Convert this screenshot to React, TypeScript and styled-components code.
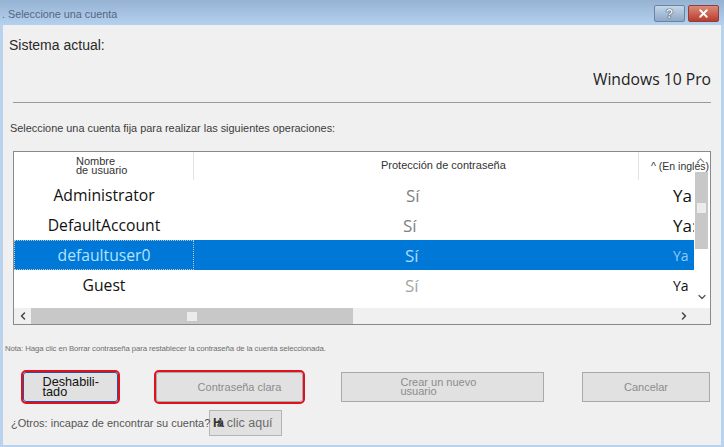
import React from 'react';
import styled, { createGlobalStyle } from 'styled-components';
import { ChevronLeft, ChevronRight, ChevronUp, ChevronDown, X } from 'lucide-react';

const accounts = [
    { name: 'Administrator', prot: 'Sí', lang: 'Ya', protOffset: 212, langSize: 17 },
    { name: 'DefaultAccount', prot: 'Sí', lang: 'Ya:', protOffset: 209, langSize: 17 },
    { name: 'defaultuser0', prot: 'Sí', lang: 'Ya', protOffset: 211, langSize: 14, selected: true },
    { name: 'Guest', prot: 'Sí', lang: 'Ya', protOffset: 211, langSize: 14, faded: true },
];

const App = () => {
    return (
        <>
            <GlobalStyle />
            <Window>
                <TitleBar>
                    <Title>. Seleccione una cuenta</Title>
                    <WindowControls>
                        <HelpButton>?</HelpButton>
                        <CloseButton><X size={13} strokeWidth={3.5} color="#fff" /></CloseButton>
                    </WindowControls>
                </TitleBar>
                <Body>
                    <SystemLabel>Sistema actual:</SystemLabel>
                    <SystemName>Windows 10 Pro</SystemName>
                    <Divider />
                    <Instruction>Seleccione una cuenta fija para realizar las siguientes operaciones:</Instruction>
                    <Table>
                        <HeaderRow>
                            <UserHead>Nombre<br />de usuario</UserHead>
                            <ProtHead>Protección de contraseña</ProtHead>
                            <LangHead>^ (En inglés)</LangHead>
                            <UpArrow><ChevronUp size={13} strokeWidth={2} color="#888" /></UpArrow>
                        </HeaderRow>
                        <Middle>
                            <Rows>
                                {accounts.map((account) => (
                                    <Row key={account.name} $selected={account.selected}>
                                        <UserCell $selected={account.selected}>{account.name}</UserCell>
                                        <ProtCell $selected={account.selected} $faded={account.faded} $offset={account.protOffset}>
                                            {account.prot}
                                        </ProtCell>
                                        <LangCell $selected={account.selected} $size={account.langSize}>{account.lang}</LangCell>
                                    </Row>
                                ))}
                            </Rows>
                            <VBar>
                                <VTrack><VThumb /></VTrack>
                                <VArrow><ChevronDown size={12} strokeWidth={2.5} color="#555" /></VArrow>
                            </VBar>
                        </Middle>
                        <HBar>
                            <HArrow><ChevronLeft size={12} strokeWidth={3} color="#444" /></HArrow>
                            <HTrack><HThumb /></HTrack>
                            <HArrow><ChevronRight size={12} strokeWidth={3} color="#444" /></HArrow>
                        </HBar>
                    </Table>
                    <Note>Nota: Haga clic en Borrar contraseña para restablecer la contraseña de la cuenta seleccionada.</Note>
                    <Actions>
                        <ActionButton $w={95} $active $highlight>
                            <WrapLabel $w={56} $size={12.7} $line={10}>Deshabili-<br />tado</WrapLabel>
                        </ActionButton>
                        <ActionButton $w={147} $highlight $shift={20}>Contraseña clara</ActionButton>
                        <ActionButton $w={203}>
                            <WrapLabel $w={84} $size={11} $line={9}>Crear un nuevo<br />usuario</WrapLabel>
                        </ActionButton>
                        <ActionButton $w={128}>Cancelar</ActionButton>
                    </Actions>
                    <OtherRow>
                        <OtherText>¿Otros: incapaz de encontrar su cuenta?</OtherText>
                        <ClickButton><Garbled>Ha</Garbled>z clic aquí</ClickButton>
                    </OtherRow>
                </Body>
            </Window>
        </>
    );
};

const GlobalStyle = createGlobalStyle`
    html, body {
        margin: 0;
        padding: 0;
        width: 724px;
        height: 447px;
        overflow: hidden;
        background: #f0f0f0;
    }
    * {
        box-sizing: border-box;
    }
`;

const Window = styled.div`
    width: 724px;
    height: 447px;
    display: flex;
    flex-direction: column;
    font-family: "Liberation Sans", Arial, sans-serif;
    background: #b9d3ef;
`;

const TitleBar = styled.div`
    height: 25px;
    flex: none;
    display: flex;
    align-items: flex-start;
    justify-content: space-between;
    background: linear-gradient(#96b2d2, #b5d1f0);
    padding: 5px 5px 0 2px;
`;

const Title = styled.div`
    font-size: 10.8px;
    line-height: 18px;
    color: #54677e;
`;

const WindowControls = styled.div`
    display: flex;
    gap: 3px;
`;

const HelpButton = styled.div`
    width: 31px;
    height: 17px;
    display: flex;
    align-items: center;
    justify-content: center;
    border: 1px solid #6f83a0;
    border-radius: 2px;
    background: linear-gradient(#c4d6ea, #8ea8c6);
    color: #eef3f8;
    font-weight: bold;
    font-size: 13px;
    text-shadow: 0 0 1px #222, 0 0 1px #222;
`;

const CloseButton = styled.div`
    width: 31px;
    height: 17px;
    display: flex;
    align-items: center;
    justify-content: center;
    border: 1px solid #8f3f38;
    border-radius: 2px;
    background: linear-gradient(#dc8a78, #b83d2c);
`;

const Body = styled.div`
    flex: 1;
    margin: 0 3px 2px 3px;
    padding: 0 10px 0 10px;
    background: #f0f0f0;
    display: flex;
    flex-direction: column;
`;

const SystemLabel = styled.div`
    font-size: 14px;
    line-height: 16px;
    margin: 12px 0 0 -4px;
    color: #2a2a2a;
`;

const SystemName = styled.div`
    font-family: "Open Sans", sans-serif;
    font-size: 15.7px;
    line-height: 20px;
    margin-top: 16px;
    text-align: right;
    color: #222;
`;

const Divider = styled.div`
    height: 1px;
    margin-top: 13px;
    background: #9a9a9a;
`;

const Instruction = styled.div`
    font-size: 10.9px;
    line-height: 14px;
    margin: 18px 0 0 -3px;
    color: #3c3c3c;
`;

const Table = styled.div`
    height: 174px;
    margin-top: 16px;
    border: 1px solid #8a8a8a;
    background: #fff;
    display: flex;
    flex-direction: column;
`;

const HeaderRow = styled.div`
    position: relative;
    height: 28px;
    flex: none;
    display: grid;
    grid-template-columns: 180px 445px 1fr;
    color: #333;
`;

const UserHead = styled.div`
    border-right: 1px solid #e2e2e2;
    font-size: 11px;
    line-height: 9px;
    padding: 5px 0 0 62px;
`;

const ProtHead = styled.div`
    border-right: 1px solid #e2e2e2;
    font-size: 11px;
    line-height: 14px;
    padding: 6px 0 0 187px;
`;

const LangHead = styled.div`
    font-size: 10.5px;
    line-height: 14px;
    padding: 7px 0 0 12px;
    white-space: nowrap;
    position: relative;
    z-index: 2;
`;

const UpArrow = styled.span`
    position: absolute;
    right: 3px;
    top: 2px;
    z-index: 2;
    display: flex;
`;

const Middle = styled.div`
    flex: 1;
    display: flex;
    min-height: 0;
`;

const Rows = styled.div`
    width: 680px;
    flex: none;
    overflow: hidden;
`;

const Row = styled.div<{ $selected?: boolean }>`
    height: 30px;
    display: grid;
    grid-template-columns: 180px 445px 1fr;
    align-items: center;
    background: ${(props) => (props.$selected ? '#0078d7' : '#fff')};
    font-family: "Open Sans", sans-serif;
`;

const UserCell = styled.div<{ $selected?: boolean }>`
    height: 100%;
    display: flex;
    align-items: center;
    justify-content: center;
    font-size: 15.7px;
    color: ${(props) => (props.$selected ? '#b5e2ff' : '#111')};
    border: 1px dotted ${(props) => (props.$selected ? '#b8c8d8' : 'transparent')};
`;

const ProtCell = styled.div<{ $selected?: boolean; $faded?: boolean; $offset: number }>`
    font-size: 17px;
    padding-left: ${(props) => props.$offset}px;
    color: ${(props) => (props.$selected ? '#a8dcff' : props.$faded ? '#a5a5a5' : '#808080')};
`;

const LangCell = styled.div<{ $selected?: boolean; $size: number }>`
    font-size: ${(props) => props.$size}px;
    padding-left: 34px;
    white-space: nowrap;
    color: ${(props) => (props.$selected ? '#8fcbf5' : '#111')};
`;

const VBar = styled.div`
    flex: 1;
    display: flex;
    flex-direction: column;
    margin-top: -8px;
    position: relative;
    z-index: 1;
    padding: 0 2px 0 1px;
`;

const VTrack = styled.div`
    height: 77px;
    flex: none;
    background: #c8c8c8;
    padding-top: 31px;
    display: flex;
    justify-content: center;
`;

const VThumb = styled.div`
    width: 9px;
    height: 10px;
    background: #ececec;
`;

const VArrow = styled.div`
    margin-top: 42px;
    display: flex;
    justify-content: center;
`;

const HBar = styled.div`
    height: 16px;
    flex: none;
    display: flex;
    align-items: center;
    background: #f0f0f0;
    padding-right: 18px;
`;

const HArrow = styled.div`
    width: 17px;
    flex: none;
    display: flex;
    justify-content: center;
`;

const HTrack = styled.div`
    flex: 1;
    height: 100%;
    display: flex;
    align-items: center;
    justify-content: flex-start;
    padding-left: 156px;
    margin-right: 322px;
    background: #c8c8c8;
`;

const HThumb = styled.div`
    width: 10px;
    height: 9px;
    background: #ececec;
`;

const Note = styled.div`
    font-size: 7.8px;
    line-height: 11px;
    margin: 18px 0 0 -8px;
    letter-spacing: -0.1px;
    color: #6f6f6f;
    white-space: nowrap;
`;

const Actions = styled.div`
    display: flex;
    justify-content: space-between;
    margin: 18px 1px 0 10px;
`;

const ActionButton = styled.div<{ $w: number; $active?: boolean; $highlight?: boolean; $shift?: number }>`
    width: ${(props) => props.$w}px;
    height: 30px;
    display: flex;
    align-items: center;
    justify-content: center;
    padding-left: ${(props) => props.$shift ?? 0}px;
    font-size: 11px;
    background: #e1e1e1;
    border: 1px solid ${(props) => (props.$active ? '#2d4f9e' : '#a9a9a9')};
    border-radius: ${(props) => (props.$highlight ? '3px' : '0')};
    color: ${(props) => (props.$active ? '#111' : '#8c8c8c')};
    outline: ${(props) => (props.$highlight ? '2px solid #e0101c' : 'none')};
`;

const WrapLabel = styled.div<{ $w: number; $size: number; $line: number }>`
    width: ${(props) => props.$w}px;
    font-size: ${(props) => props.$size}px;
    line-height: ${(props) => props.$line}px;
    white-space: nowrap;
`;

const OtherRow = styled.div`
    display: flex;
    align-items: center;
    height: 26px;
    margin: 8px 0 0 -2px;
`;

const OtherText = styled.div`
    position: relative;
    z-index: 1;
    font-size: 11px;
    color: #555;
    white-space: nowrap;
    width: 198px;
`;

const ClickButton = styled.div`
    width: 73px;
    height: 26px;
    display: flex;
    align-items: center;
    font-size: 12.5px;
    padding-left: 3px;
    color: #6b6b6b;
    background: #e1e1e1;
    border: 1px solid #b5b5b5;
    white-space: pre;
`;

const Garbled = styled.span`
    color: #333;
    font-weight: bold;
    letter-spacing: -5px;
    margin-right: -2px;
`;

export default App;
